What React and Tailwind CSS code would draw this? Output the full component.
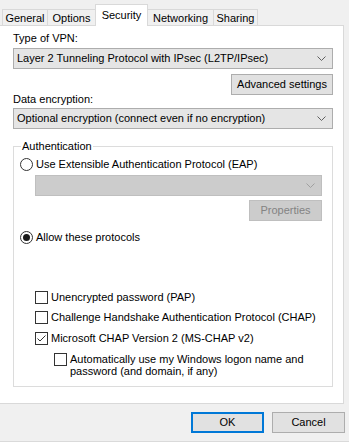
import React from "react";

const Chevron = ({ color = "#606060" }) => (
  <svg width="9" height="5" viewBox="0 0 9 5" className="shrink-0">
    <path d="M0.5 0.5 L4.5 4.5 L8.5 0.5" fill="none" stroke={color} strokeWidth="1" />
  </svg>
);

const Radio = ({ checked }) => (
  <span className="w-[13px] h-[13px] rounded-full border border-[#333333] bg-white flex items-center justify-center shrink-0">
    {checked && <span className="w-[7px] h-[7px] rounded-full bg-[#1a1a1a]" />}
  </span>
);

const Check = ({ checked }) => (
  <span className="w-[13px] h-[13px] border border-[#333333] bg-white flex items-center justify-center shrink-0">
    {checked && (
      <svg width="11" height="11" viewBox="0 0 11 11">
        <path d="M1.5 5.5 L4 8 L9.5 2.5" fill="none" stroke="#333333" strokeWidth="1" />
      </svg>
    )}
  </span>
);

const Tab = ({ label, className, selected }) => (
  <div
    className={
      (selected
        ? "-ml-px relative z-10 -mb-px h-[22px] bg-white border-t border-l border-r border-[#d9d9d9] flex items-start justify-center pt-[3px] leading-[14px] "
        : "-ml-px h-[16px] bg-[#f0f0f0] border-t border-l border-r border-[#d9d9d9] flex items-center justify-center leading-[14px] ") +
      className
    }
  >
    {label}
  </div>
);

export default function App() {
  return (
    <div className="w-[349px] h-[442px] bg-[#f0f0f0] border-b border-[#dadada] flex flex-col font-['Liberation_Sans',Arial,sans-serif] text-[11px] text-black overflow-hidden">
      {/* tabs */}
      <div className="h-[25px] flex items-end pl-[3px]">
        <Tab label="General" className="w-[46px]" />
        <Tab label="Options" className="w-[49px]" />
        <Tab label="Security" className="w-[53px]" selected />
        <Tab label="Networking" className="w-[67px]" />
        <Tab label="Sharing" className="w-[45px]" />
      </div>

      {/* panel */}
      <div className="w-[344px] h-[379px] bg-white border-t border-r border-b border-[#d9d9d9] pl-[13px] pr-[10px] flex flex-col">
        <div className="mt-[5px] h-[15px] leading-[15px]">Type of VPN:</div>
        <div className="mt-[2px] h-[21px] bg-[#e5e5e5] border border-[#adadad] flex items-center justify-between pl-[3px] pr-[6px]">
          <span>Layer 2 Tunneling Protocol with IPsec (L2TP/IPsec)</span>
          <Chevron />
        </div>
        <div className="mt-[5px] self-end w-[102px] h-[21px] bg-[#e1e1e1] border border-[#adadad] flex items-center justify-center">
          Advanced settings
        </div>
        <div className="-mt-[2px] h-[13px] leading-[13px]">Data encryption:</div>
        <div className="mt-[2px] h-[21px] bg-[#e5e5e5] border border-[#adadad] flex items-center justify-between pl-[3px] pr-[6px]">
          <span>Optional encryption (connect even if no encryption)</span>
          <Chevron />
        </div>

        {/* group box */}
        <div className="relative mt-[17px] h-[241px] border border-[#dcdcdc] pl-[6px] pr-[10px] flex flex-col">
          <span className="absolute -top-[8px] left-[7px] bg-white px-[1px] leading-[14px]">Authentication</span>

          <div className="mt-[10px] h-[15px] flex items-center gap-[3px]">
            <Radio />
            <span>Use Extensible Authentication Protocol (EAP)</span>
          </div>
          <div className="mt-[3px] ml-[15px] h-[21px] bg-[#cccccc] border border-[#bfbfbf] flex items-center justify-end pr-[6px]">
            <Chevron color="#a0a0a0" />
          </div>
          <div className="mt-[4px] self-end w-[73px] h-[21px] bg-[#cccccc] border border-[#bfbfbf] flex items-center justify-center text-[#838383]">
            Properties
          </div>
          <div className="mt-[9px] h-[15px] flex items-center gap-[3px]">
            <Radio checked />
            <span>Allow these protocols</span>
          </div>

          <div className="mt-[45px] ml-[15px] h-[15px] flex items-center gap-[3px]">
            <Check />
            <span>Unencrypted password (PAP)</span>
          </div>
          <div className="mt-[5px] ml-[15px] h-[15px] flex items-center gap-[3px]">
            <Check />
            <span>Challenge Handshake Authentication Protocol (CHAP)</span>
          </div>
          <div className="mt-[6px] ml-[15px] h-[15px] flex items-center gap-[3px]">
            <Check checked />
            <span>Microsoft CHAP Version 2 (MS-CHAP v2)</span>
          </div>
          <div className="mt-[7px] ml-[34px] flex items-start gap-[3px]">
            <Check />
            <span className="leading-[12px]">
              Automatically use my Windows logon name and
              <br />
              password (and domain, if any)
            </span>
          </div>
        </div>
      </div>

      {/* bottom buttons */}
      <div className="mt-[8px] flex justify-end gap-[8px] pr-[4px]">
        <div className="w-[73px] h-[21px] bg-[#e1e1e1] border-2 border-[#0078d7] flex items-center justify-center">OK</div>
        <div className="w-[73px] h-[21px] bg-[#e1e1e1] border border-[#adadad] flex items-center justify-center">Cancel</div>
      </div>
    </div>
  );
}
